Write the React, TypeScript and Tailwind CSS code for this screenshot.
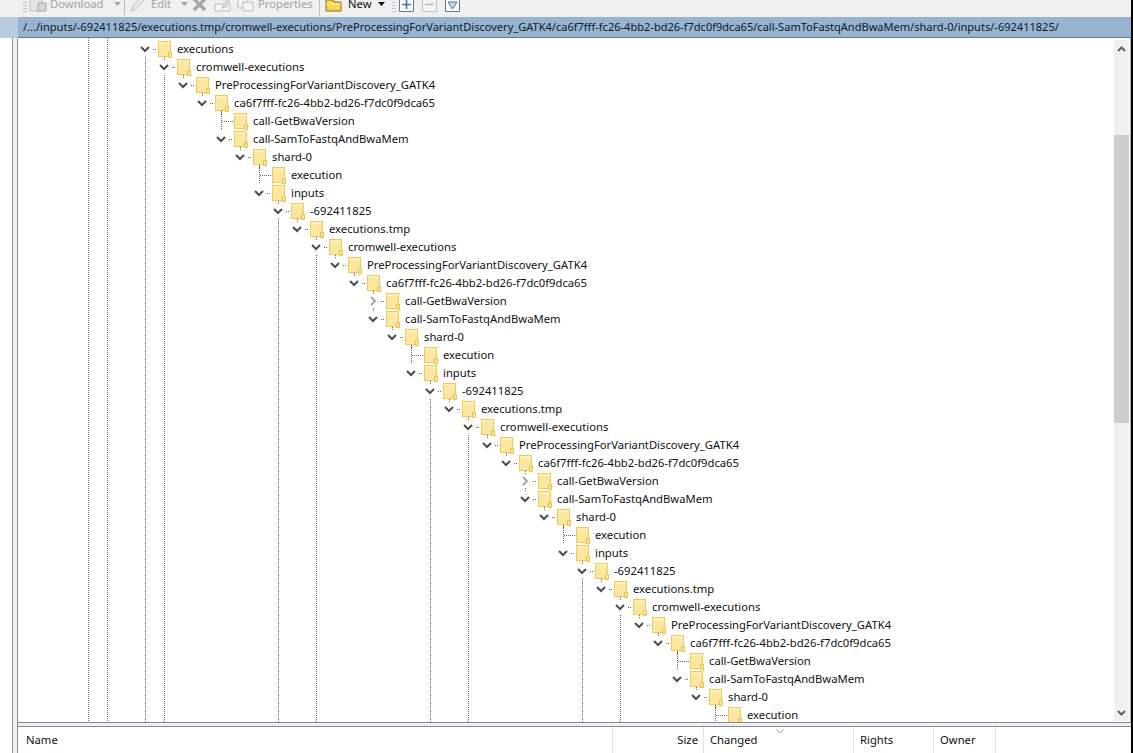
type Row = { name: string; d: number; kind: 'open' | 'closed' | 'leaf'; long?: boolean };

const PRE = 'PreProcessingForVariantDiscovery_GATK4';
const CA = 'ca6f7fff-fc26-4bb2-bd26-f7dc0f9dca65';
const SAM = 'call-SamToFastqAndBwaMem';
const GET = 'call-GetBwaVersion';

const cycle = (d: number, first: string, firstLong: boolean, get: 'closed' | 'leaf'): Row[] => [
  { name: first, d, kind: 'open', long: firstLong },
  { name: 'cromwell-executions', d: d + 1, kind: 'open', long: true },
  { name: PRE, d: d + 2, kind: 'open' },
  { name: CA, d: d + 3, kind: 'open' },
  { name: GET, d: d + 4, kind: get },
  { name: SAM, d: d + 4, kind: 'open' },
  { name: 'shard-0', d: d + 5, kind: 'open' },
  { name: 'execution', d: d + 6, kind: 'leaf' },
  { name: 'inputs', d: d + 6, kind: 'open' },
];

const rows: Row[] = [
  ...cycle(0, 'executions', true, 'leaf'),
  { name: '-692411825', d: 7, kind: 'open', long: true },
  ...cycle(8, 'executions.tmp', false, 'closed'),
  { name: '-692411825', d: 15, kind: 'open', long: true },
  ...cycle(16, 'executions.tmp', false, 'closed'),
  { name: '-692411825', d: 23, kind: 'open', long: true },
  ...cycle(24, 'executions.tmp', false, 'leaf'),
];

const ROW_H = 18;
const PANEL_H = 684;

function Folder() {
  return (
    <svg width="15" height="18" viewBox="0 0 15 18" className="shrink-0">
      <rect x="0.5" y="1.5" width="12" height="15" fill="#fde7a0" stroke="#efcb58" />
      <rect x="1" y="2" width="11" height="2" fill="#ffefb8" />
      <path d="M10.5 12.5h3v5h-3z" fill="#fde7a0" stroke="#e9c145" />
    </svg>
  );
}

function Chevron({ kind }: { kind: Row['kind'] }) {
  if (kind === 'leaf') return <span className="w-[10px] shrink-0" />;
  if (kind === 'closed') {
    return (
      <svg width="10" height="12" viewBox="0 0 10 12" className="shrink-0">
        <path d="M3 2l4 4-4 4" fill="none" stroke="#a6a6a6" strokeWidth="2" />
      </svg>
    );
  }
  return (
    <svg width="10" height="12" viewBox="0 0 10 12" className="shrink-0">
      <path d="M1 4l4 4 4-4" fill="none" stroke="#4d4d4d" strokeWidth="2" />
    </svg>
  );
}

function Guides() {
  const seg: string[] = [];
  seg.push(`M70.5 0V${PANEL_H}`, `M89.5 0V${PANEL_H}`);
  rows.forEach((r, i) => {
    const cx = 127 + 19 * r.d;
    const y = 11 + ROW_H * i;
    if (r.kind === 'leaf') {
      seg.push(`M${cx + 0.5} ${y - 9}V${y + 9}`, `M${cx + 1} ${y + 0.5}H${cx + 13}`);
    } else {
      seg.push(`M${cx + 8} ${y + 0.5}H${cx + 12}`);
    }
    if (r.kind === 'closed') seg.push(`M${cx + 0.5} ${y + 7}V${y + 11}`);
    if (r.kind === 'open') seg.push(`M${cx + 19.5} ${y + 8}V${y + 11}`);
    if (r.long) seg.push(`M${cx + 0.5} ${y + 8}V${PANEL_H}`);
  });
  return (
    <svg className="absolute left-0 top-0" width="1095" height={PANEL_H} shapeRendering="crispEdges">
      <path d={seg.join(' ')} fill="none" stroke="#666666" strokeDasharray="1 1" />
    </svg>
  );
}

function Grip() {
  return <span className="block w-[4px] h-[16px] shrink-0 bg-[repeating-linear-gradient(to_bottom,#c4c4c4_0,#c4c4c4_1px,transparent_1px,transparent_3px)]" />;
}

function Caret({ color }: { color: string }) {
  return (
    <svg width="7" height="4" viewBox="0 0 7 4" className="block shrink-0">
      <path d="M0 0h7L3.5 4z" fill={color} />
    </svg>
  );
}

function Toolbar() {
  return (
    <div className="h-[17px] overflow-hidden bg-[#f0f0f0] shrink-0">
      <div className="h-[24px] -mt-[8px] flex items-center pl-[23px] text-[#a3a3a3]">
        <Grip />
        <svg width="18" height="18" viewBox="0 0 18 18" className="ml-[2px] shrink-0">
          <path d="M1 3h12v13H1z" fill="#e6e6e6" stroke="#bdbdbd" />
          <path d="M9 8h8v8H9z" fill="#d4d4d4" stroke="#a8a8a8" />
        </svg>
        <span className="ml-[3px] w-[60px] shrink-0">Download</span>
        <span className="ml-[4px]"><Caret color="#a3a3a3" /></span>
        <span className="ml-[3px] w-px h-[22px] bg-[#bcbcbc]" />
        <svg width="16" height="18" viewBox="0 0 16 18" className="ml-[5px] shrink-0">
          <path d="M1 16l2-5 8-9 3 3-8 9z" fill="#ececec" stroke="#bdbdbd" />
        </svg>
        <span className="ml-[5px] w-[24px] shrink-0">Edit</span>
        <span className="ml-[6px]"><Caret color="#a3a3a3" /></span>
        <svg width="15" height="16" viewBox="0 0 15 16" className="ml-[4px] shrink-0">
          <path d="M2 3l11 11M13 3L2 14" stroke="#a6a6a6" strokeWidth="3.4" />
        </svg>
        <svg width="17" height="18" viewBox="0 0 17 18" className="ml-[7px] shrink-0">
          <path d="M1 9h15v7H1z" fill="#f4f4f4" stroke="#bdbdbd" />
          <path d="M8 13l2-3 4-7 2 1-4 8z" fill="#e4e4e4" stroke="#bdbdbd" />
        </svg>
        <svg width="17" height="18" viewBox="0 0 17 18" className="ml-[6px] shrink-0">
          <path d="M1 2h9v11H1z" fill="#f4f4f4" stroke="#bdbdbd" />
          <path d="M6 7h10v9H6z" fill="#f4f4f4" stroke="#bdbdbd" />
        </svg>
        <span className="ml-[4px] w-[56px] shrink-0">Properties</span>
        <span className="ml-[5px] w-px h-[22px] bg-[#bcbcbc]" />
        <svg width="18" height="18" viewBox="0 0 18 18" className="ml-[5px] shrink-0">
          <path d="M1 5h7l1 2h7v9H1z" fill="#fcd652" stroke="#8a6d1d" />
          <path d="M1 9h15" stroke="#fff0a8" />
        </svg>
        <span className="ml-[5px] w-[26px] shrink-0 text-[#111111]">New</span>
        <span className="ml-[4px]"><Caret color="#111111" /></span>
        <span className="ml-[7px]"><Grip /></span>
        <svg width="15" height="15" viewBox="0 0 15 15" className="ml-[3px] shrink-0">
          <path d="M.5.5h14v14H.5z" fill="#ffffff" stroke="#5b7ba3" />
          <path d="M7.5 3v9M3 7.5h9" stroke="#4a74a8" strokeWidth="1.6" />
        </svg>
        <svg width="15" height="15" viewBox="0 0 15 15" className="ml-[8px] shrink-0">
          <path d="M.5.5h14v14H.5z" fill="#f4f4f4" stroke="#c2c2c2" />
          <path d="M3 7.5h9" stroke="#bdbdbd" strokeWidth="1.6" />
        </svg>
        <svg width="15" height="15" viewBox="0 0 15 15" className="ml-[8px] shrink-0">
          <path d="M.5.5h14v14H.5z" fill="#ffffff" stroke="#5b7ba3" />
          <path d="M3 5h9L7.5 12z" fill="#c9d8ea" stroke="#4a74a8" />
        </svg>
      </div>
    </div>
  );
}

function Scrollbar() {
  return (
    <div className="w-[15px] shrink-0 mt-[2px] mb-px bg-[#f0f0f0] flex flex-col">
      <div className="h-[17px] flex items-center justify-center">
        <svg width="9" height="6" viewBox="0 0 9 6"><path d="M1 5l3.5-3.5L8 5" fill="none" stroke="#606060" strokeWidth="2" /></svg>
      </div>
      <div className="flex-1 pt-[78px]">
        <div className="h-[288px] bg-[#cdcdcd]" />
      </div>
      <div className="h-[17px] flex items-center justify-center">
        <svg width="9" height="6" viewBox="0 0 9 6"><path d="M1 1l3.5 3.5L8 1" fill="none" stroke="#606060" strokeWidth="2" /></svg>
      </div>
    </div>
  );
}

function Header() {
  return (
    <div className="relative h-[26px] flex shrink-0 bg-white border-t border-[#7f8a94] box-content text-[#111111]">
      <div className="w-[595px] pl-[8px] pt-[5px] border-r border-[#e5e5e5]">Name</div>
      <div className="w-[91px] pr-[5px] pt-[5px] text-right border-r border-[#e5e5e5]">Size</div>
      <div className="w-[150px] pl-[6px] pt-[5px] border-r border-[#e5e5e5]">Changed</div>
      <div className="w-[80px] pl-[6px] pt-[5px] border-r border-[#e5e5e5]">Rights</div>
      <div className="w-[62px] pl-[6px] pt-[5px] border-r border-[#e5e5e5]">Owner</div>
      <svg width="8" height="5" viewBox="0 0 8 5" className="absolute left-[758px] top-[2px]">
        <path d="M.5.5L4 4 7.5.5" fill="none" stroke="#a0a0a0" />
      </svg>
    </div>
  );
}

export default function App() {
  return (
    <div className="w-[1133px] h-[753px] flex overflow-hidden bg-white text-[11.25px] leading-[16px] font-['Noto_Sans',sans-serif]">
      <div className="flex-1 flex flex-col min-w-0">
        <Toolbar />
        <div className="flex-1 flex min-h-0">
          <div className="w-[18px] shrink-0 flex flex-col">
            <div className="h-[21px] bg-[#b9cbdc] shrink-0" />
            <div className="flex-1 flex">
              <div className="w-[12px] bg-white" />
              <div className="w-[6px] bg-[#f0f0f0] border-x border-[#8a9098]" />
            </div>
          </div>
          <div className="flex-1 flex flex-col min-w-0">
            <div className="h-[21px] shrink-0 bg-[#98b3d0] border-b border-[#707a85] pl-[5px] flex items-center whitespace-nowrap text-[11.05px] text-[#0a1a2b]">
              /.../inputs/-692411825/executions.tmp/cromwell-executions/PreProcessingForVariantDiscovery_GATK4/ca6f7fff-fc26-4bb2-bd26-f7dc0f9dca65/call-SamToFastqAndBwaMem/shard-0/inputs/-692411825/
            </div>
            <div className="h-[685px] shrink-0 flex border-b border-[#7f8a94]">
              <div className="relative flex-1 overflow-hidden pt-[2px] text-[#111111]">
                <Guides />
                {rows.map((r, i) => (
                  <div key={i} className="relative h-[18px] flex items-center whitespace-nowrap" style={{ paddingLeft: 122 + 19 * r.d }}>
                    <Chevron kind={r.kind} />
                    <span className="w-[8px] shrink-0" />
                    <Folder />
                    <span className="ml-[4px]">{r.name}</span>
                  </div>
                ))}
              </div>
              <Scrollbar />
              <div className="w-[2px] shrink-0 bg-white border-r border-[#a8adb3]" />
            </div>
            <div className="h-[3px] shrink-0 bg-[#f0f0f0]" />
            <Header />
          </div>
        </div>
      </div>
      <div className="w-[2px] shrink-0 bg-black" />
    </div>
  );
}
